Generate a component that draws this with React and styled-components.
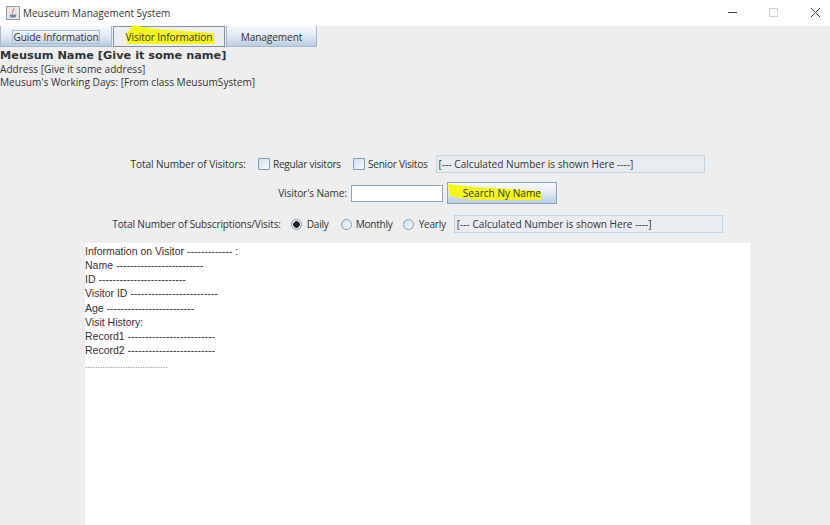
import styled, { createGlobalStyle } from "styled-components";

const GlobalStyle = createGlobalStyle`
  html, body {
    margin: 0;
    padding: 0;
    background: #eeeeee;
  }
  body {
    font-family: "Open Sans", "DejaVu Sans", sans-serif;
    overflow: hidden;
  }
`;

const Frame = styled.div`
  width: 830px;
  height: 525px;
  display: flex;
  flex-direction: column;
  overflow: hidden;
  background: #eeeeee;
`;

const TitleBar = styled.div`
  height: 26px;
  flex: none;
  display: flex;
  align-items: center;
  background: #ffffff;
  padding-left: 6px;
`;

const AppIcon = styled.svg`
  width: 14px;
  height: 14px;
  margin-right: 3px;
`;

const Title = styled.span`
  font-family: "Open Sans", sans-serif;
  font-size: 10px;
  color: #333333;
  flex: 1;
`;

const WindowButton = styled.svg`
  width: ${(p) => p.$width}px;
  height: 26px;
  flex: none;
`;

const TabStrip = styled.div`
  height: 21px;
  flex: none;
  display: flex;
  gap: 1px;
`;

const Tab = styled.div`
  position: relative;
  box-sizing: border-box;
  width: ${(p) => p.$width}px;
  display: flex;
  align-items: center;
  justify-content: center;
  padding-top: 1px;
  font-size: 10.1px;
  letter-spacing: -0.08px;
  color: #333333;
  border: 1px solid ${(p) => (p.$active ? "#7f92a6" : "#a3b8cc")};
  border-top: ${(p) => (p.$active ? "1px solid #7f92a6" : "none")};
  background: ${(p) =>
    p.$active ? "#eeeeee" : "linear-gradient(#f6f9fc 0%, #e4ecf4 45%, #b9cde0 100%)"};
`;

const FocusLabel = styled.span`
  border: 1px solid #a8bdd2;
  margin-top: 1px;
  line-height: 12px;
  position: relative;
`;

const Label = styled.span`
  position: relative;
  white-space: nowrap;
`;

const Marker = styled.svg`
  position: absolute;
  left: ${(p) => p.$left}px;
  top: ${(p) => p.$top}px;
  overflow: visible;
`;

const Header = styled.div`
  height: 106px;
  flex: none;
  padding-top: 2px;
  color: #333333;
  font-size: 10.1px;
  line-height: 13px;
`;

const MuseumName = styled.div`
  font-family: "DejaVu Sans", sans-serif;
  font-size: 11.3px;
  font-weight: bold;
  line-height: 14px;
`;

const Form = styled.div`
  flex: 1;
  min-height: 0;
  display: flex;
  flex-direction: column;
  align-items: center;
  padding-left: 5px;
`;

const Row = styled.div`
  height: ${(p) => p.$height}px;
  margin-bottom: ${(p) => p.$gap}px;
  flex: none;
  display: flex;
  align-items: center;
  font-size: 10.1px;
  color: #333333;
  white-space: nowrap;
`;

const RowLabel = styled.span`
  margin-right: ${(p) => p.$gap}px;
  letter-spacing: ${(p) => p.$tight || 0}px;
`;

const CheckBox = styled.span`
  box-sizing: border-box;
  width: 12px;
  height: 12px;
  margin-right: 3px;
  border: 1px solid #7f9db9;
  border-radius: 1px;
  background: linear-gradient(135deg, #cfdeec, #f7fafc);
`;

const Radio = styled.span`
  box-sizing: border-box;
  width: 11px;
  height: 11px;
  margin-right: ${(p) => p.$gap}px;
  border: 1px solid #7f9db9;
  border-radius: 50%;
  background: ${(p) =>
    p.$checked
      ? "radial-gradient(circle, #222222 0 3px, #e6eef6 3.6px)"
      : "linear-gradient(135deg, #cfdeec, #f7fafc)"};
`;

const OptionText = styled.span`
  margin-right: ${(p) => p.$gap}px;
  letter-spacing: -0.25px;
`;

const ResultField = styled.div`
  box-sizing: border-box;
  width: 269px;
  height: 18px;
  display: flex;
  align-items: center;
  padding-left: 2px;
  border: 1px solid #c3d4e4;
  background: #e9edf1;
`;

const NameInput = styled.div`
  box-sizing: border-box;
  width: 92px;
  height: 17px;
  margin-right: 4px;
  border: 1px solid #8ca3ba;
  background: #ffffff;
`;

const SearchButton = styled.div`
  position: relative;
  box-sizing: border-box;
  width: 110px;
  height: 22px;
  display: flex;
  align-items: center;
  justify-content: center;
  border: 1px solid #8ca3ba;
  background: linear-gradient(#f6f9fc 0%, #e4ecf4 45%, #b9cde0 100%);
`;

const InfoArea = styled.div`
  box-sizing: border-box;
  width: 665px;
  flex: 1;
  padding-top: 1px;
  background: #ffffff;
  font-family: "Liberation Sans", sans-serif;
  font-size: 10.5px;
  line-height: 14.15px;
  color: #333333;
`;

const InfoLine = styled.div`
  white-space: nowrap;
`;

const InfoDots = styled.div`
  color: #777777;
  font-size: 9px;
  line-height: 16px;
`;

const dashes = "-------------------------";

const infoLines = [
  "Information on Visitor ------------- :",
  `Name ${dashes}`,
  `ID ${dashes}`,
  `Visitor ID ${dashes}`,
  `Age ${dashes}`,
  "Visit History:",
  `Record1 ${dashes}`,
  `Record2 ${dashes}`,
];

export default function App() {
  return (
    <Frame>
      <GlobalStyle />
      <TitleBar>
        <AppIcon viewBox="0 0 14 14">
          <rect x="0.5" y="0.5" width="13" height="13" fill="#e8e8ec" stroke="#9a9aa2" />
          <path d="M7.5 2.5c1 2-2 3-1 5" fill="none" stroke="#d9823b" strokeWidth="1.2" />
          <path d="M3.5 8.5h7l-1 3h-5z" fill="#6d89a8" />
        </AppIcon>
        <Title>Meuseum Management System</Title>
        <WindowButton $width={41} viewBox="0 0 41 26">
          <path d="M16 12.5h9" stroke="#444444" strokeWidth="1" />
        </WindowButton>
        <WindowButton $width={41} viewBox="0 0 41 26">
          <rect x="16.5" y="8.5" width="8" height="8" fill="none" stroke="#d0d0d0" />
        </WindowButton>
        <WindowButton $width={36} viewBox="0 0 36 26">
          <path d="M17 8l9 9M26 8l-9 9" stroke="#444444" strokeWidth="1" />
        </WindowButton>
      </TitleBar>

      <TabStrip>
        <Tab $width={112}>
          <FocusLabel>Guide Information</FocusLabel>
        </Tab>
        <Tab $width={112} $active>
          <Marker $left={0} $top={0} width="110" height="19" viewBox="0 0 110 19">
            <path d="M13 7L19 -2L40 2L100 6L101 17L13 17Z" fill="#f4f716" />
          </Marker>
          <Label>Visitor Information</Label>
        </Tab>
        <Tab $width={91}>Management</Tab>
      </TabStrip>

      <Header>
        <MuseumName>Meusum Name [Give it some name]</MuseumName>
        <div>Address [Give it some address]</div>
        <div>Meusum's Working Days: [From class MeusumSystem]</div>
      </Header>

      <Form>
        <Row $height={18} $gap={9}>
          <RowLabel $gap={12} $tight={-0.06}>Total Number of Visitors:</RowLabel>
          <CheckBox />
          <OptionText $gap={12}>Regular visitors</OptionText>
          <CheckBox />
          <OptionText $gap={8}>Senior Visitos</OptionText>
          <ResultField>[--- Calculated Number is shown Here ----]</ResultField>
        </Row>
        <Row $height={22} $gap={11}>
          <RowLabel $gap={4} $tight={-0.1}>Visitor's Name:</RowLabel>
          <NameInput />
          <SearchButton>
            <Marker $left={0} $top={0} width="108" height="20" viewBox="0 0 108 20">
              <path d="M0 1L27 4L93 8L93 17L25 17L2 13Z" fill="#f4f716" />
            </Marker>
            <Label>Search Ny Name</Label>
          </SearchButton>
        </Row>
        <Row $height={18} $gap={10}>
          <RowLabel $gap={10} $tight={-0.15}>Total Number of Subscriptions/Visits:</RowLabel>
          <Radio $checked $gap={5} />
          <OptionText $gap={12}>Daily</OptionText>
          <Radio $gap={4} />
          <OptionText $gap={10}>Monthly</OptionText>
          <Radio $gap={5} />
          <OptionText $gap={8}>Yearly</OptionText>
          <ResultField>[--- Calculated Number is shown Here ----]</ResultField>
        </Row>
        <InfoArea>
          {infoLines.map((line) => (
            <InfoLine key={line}>{line}</InfoLine>
          ))}
          <InfoDots>.................................</InfoDots>
        </InfoArea>
      </Form>
    </Frame>
  );
}
